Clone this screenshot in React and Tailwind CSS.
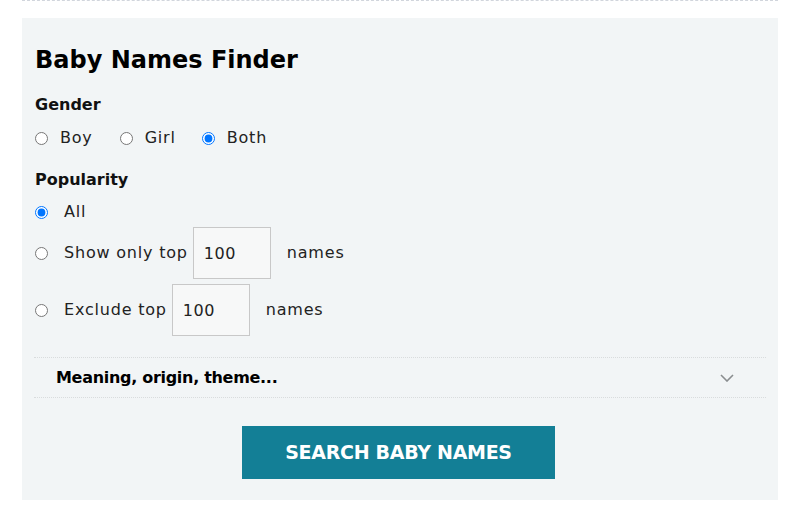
import { useState } from "react";

const font = { fontFamily: '"DejaVu Sans", sans-serif' };

const Radio = ({ name, checked, onChange }) => (
  <input
    type="radio"
    name={name}
    checked={checked}
    onChange={onChange}
    className="m-0 h-[13px] w-[13px] shrink-0"
  />
);

const App = () => {
  const [gender, setGender] = useState("both");
  const [popularity, setPopularity] = useState("all");
  const [topOnly, setTopOnly] = useState("100");
  const [exclude, setExclude] = useState("100");

  return (
    <div className="w-[800px] h-[525px] bg-white text-[#111]" style={font}>
      <div className="mx-[22px] border-t border-dashed border-gray-300 pt-[17px]">
        <div className="bg-[#f2f5f6] h-[482px] px-[13px] pt-[26px]">
          <h1 className="text-[24px] leading-[32px] font-bold text-black">
            Baby Names Finder
          </h1>

          <div className="mt-[19px] text-[16px] leading-[20px] font-bold">
            Gender
          </div>
          <div className="mt-[13px] flex items-center h-[20px] text-[16px] tracking-[0.8px] text-[#222]">
            <label className="flex items-center">
              <Radio
                name="gender"
                checked={gender === "boy"}
                onChange={() => setGender("boy")}
              />
              <span className="ml-[12px]">Boy</span>
            </label>
            <label className="flex items-center ml-[27px]">
              <Radio
                name="gender"
                checked={gender === "girl"}
                onChange={() => setGender("girl")}
              />
              <span className="ml-[12px]">Girl</span>
            </label>
            <label className="flex items-center ml-[26px]">
              <Radio
                name="gender"
                checked={gender === "both"}
                onChange={() => setGender("both")}
              />
              <span className="ml-[12px]">Both</span>
            </label>
          </div>

          <div className="mt-[22px] text-[16px] leading-[20px] font-bold">
            Popularity
          </div>
          <label className="mt-[12px] flex items-center h-[20px] text-[16px] tracking-[0.8px] text-[#222]">
            <Radio
              name="pop"
              checked={popularity === "all"}
              onChange={() => setPopularity("all")}
            />
            <span className="ml-[16px]">All</span>
          </label>
          <div className="mt-[5px] flex items-center text-[16px] tracking-[0.8px] text-[#222]">
            <Radio
              name="pop"
              checked={popularity === "top"}
              onChange={() => setPopularity("top")}
            />
            <span className="ml-[16px]">Show only top</span>
            <input
              value={topOnly}
              onChange={(e) => setTopOnly(e.target.value)}
              className="ml-[5px] w-[78px] h-[52px] border border-[#c8c8c8] bg-[#f7f8f8] px-[10px] text-[16px] tracking-[0.5px] text-[#222] outline-none"
            />
            <span className="ml-[16px]">names</span>
          </div>
          <div className="mt-[5px] flex items-center text-[16px] tracking-[0.8px] text-[#222]">
            <Radio
              name="pop"
              checked={popularity === "exclude"}
              onChange={() => setPopularity("exclude")}
            />
            <span className="ml-[16px]">Exclude top</span>
            <input
              value={exclude}
              onChange={(e) => setExclude(e.target.value)}
              className="ml-[5px] w-[78px] h-[52px] border border-[#c8c8c8] bg-[#f7f8f8] px-[10px] text-[16px] tracking-[0.5px] text-[#222] outline-none"
            />
            <span className="ml-[16px]">names</span>
          </div>

          <div className="mt-[21px] -mx-px border-y border-dotted border-[#d9dcdd] h-[41px] flex items-center justify-between pl-[22px] pr-[32px]">
            <span className="text-[16px] font-bold text-black tracking-[-0.3px]">
              Meaning, origin, theme...
            </span>
            <svg
              width="14"
              height="8"
              viewBox="0 0 14 8"
              fill="none"
              stroke="#8a8d8f"
              strokeWidth="1.6"
            >
              <path d="M1 1l6 6 6-6" />
            </svg>
          </div>

          <div className="mt-[28px] flex justify-center pr-[3px]">
            <button className="w-[313px] h-[53px] bg-[#137f96] text-white text-[19px] font-bold tracking-[-0.3px]">
              SEARCH BABY NAMES
            </button>
          </div>
        </div>
      </div>
    </div>
  );
};

export default App;
